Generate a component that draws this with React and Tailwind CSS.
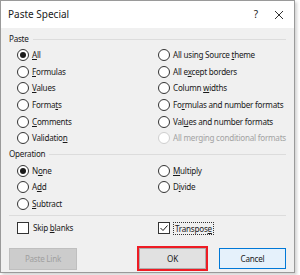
import React from 'react';

const font = { fontFamily: '"Noto Sans", "Open Sans", sans-serif' };

// label with one underlined access key (u < 0 means none)
function Label({ text, u, disabled }) {
  const color = disabled ? 'text-[#a3a3a3]' : 'text-[#1a1a1a]';
  if (u < 0) return <span className={`whitespace-nowrap ${color}`}>{text}</span>;
  return (
    <span className={`whitespace-nowrap ${color}`}>
      {text.slice(0, u)}
      <span className="underline underline-offset-[1px]">{text[u]}</span>
      {text.slice(u + 1)}
    </span>
  );
}

function Radio({ text, u, checked, disabled }) {
  return (
    <div className="h-[16.6px] flex items-center gap-[3px]">
      <div
        className={`w-[12px] h-[12px] rounded-full border bg-white flex items-center justify-center flex-shrink-0 ${
          disabled ? 'border-[#cfcfcf]' : 'border-[#333333]'
        }`}
      >
        {checked && <div className="w-[6px] h-[6px] rounded-full bg-[#1a1a1a]" />}
      </div>
      <Label text={text} u={u} disabled={disabled} />
    </div>
  );
}

function Heading({ children }) {
  return (
    <div className="h-[12px] flex items-center gap-[4px] text-[#1a1a1a]">
      <span>{children}</span>
      <div className="flex-1 h-px bg-[#dcdcdc]" />
    </div>
  );
}

const pasteLeft = [
  { text: 'All', u: 0, checked: true },
  { text: 'Formulas', u: 0 },
  { text: 'Values', u: 0 },
  { text: 'Formats', u: 5 },
  { text: 'Comments', u: 0 },
  { text: 'Validation', u: 9 },
];

const pasteRight = [
  { text: 'All using Source theme', u: 17 },
  { text: 'All except borders', u: 5 },
  { text: 'Column widths', u: 7 },
  { text: 'Formulas and number formats', u: 2 },
  { text: 'Values and number formats', u: 3 },
  { text: 'All merging conditional formats', u: -1, disabled: true },
];

const opLeft = [
  { text: 'None', u: 1, checked: true },
  { text: 'Add', u: 1 },
  { text: 'Subtract', u: 0 },
];

const opRight = [
  { text: 'Multiply', u: 0 },
  { text: 'Divide', u: 1 },
];

export default function App() {
  return (
    <div className="w-[300px] h-[275px] bg-white" style={font}>
      <div className="w-[295px] h-[273px] border border-[#9a9a9a] flex flex-col shadow-[2px_2px_3px_rgba(0,0,0,0.18)]">
        <div className="h-[27px] bg-white flex items-center pl-[7px] pr-[8px] text-[10px] text-[#1a1a1a]">
          <span className="flex-1">Paste Special</span>
          <span className="w-[20px] text-center text-[10px]">?</span>
          <svg width="10" height="10" viewBox="0 0 10 10" className="ml-[8px] mr-[2px]">
            <path d="M1 1 L9 9 M9 1 L1 9" stroke="#1a1a1a" strokeWidth="0.9" />
          </svg>
        </div>
        <div className="flex-1 bg-[#f0f0f0] pt-[5px] px-[8px] text-[8.1px] tracking-[-0.24px] leading-[12px]">
          <Heading>Paste</Heading>
          <div className="mt-[2px] pl-[8px] grid grid-cols-[141px_1fr]">
            <div className="flex flex-col">
              {pasteLeft.map((r) => (
                <Radio key={r.text} {...r} />
              ))}
            </div>
            <div className="flex flex-col">
              {pasteRight.map((r) => (
                <Radio key={r.text} {...r} />
              ))}
            </div>
          </div>
          <div className="mt-[1.5px]">
            <Heading>Operation</Heading>
          </div>
          <div className="mt-[2.5px] pl-[8px] grid grid-cols-[141px_1fr]">
            <div className="flex flex-col">
              {opLeft.map((r) => (
                <Radio key={r.text} {...r} />
              ))}
            </div>
            <div className="flex flex-col">
              {opRight.map((r) => (
                <Radio key={r.text} {...r} />
              ))}
            </div>
          </div>
          <div className="mt-[2.7px] h-px bg-[#dcdcdc]" />
          <div className="mt-[4px] pl-[8px] h-[16px] grid grid-cols-[141px_1fr] items-center">
            <div className="flex items-center gap-[4px]">
              <div className="w-[12px] h-[12px] border border-[#333333] bg-white" />
              <Label text="Skip blanks" u={5} />
            </div>
            <div className="flex items-center gap-[3px]">
              <div className="w-[12px] h-[12px] border border-[#333333] bg-white flex items-center justify-center">
                <svg width="10" height="10" viewBox="0 0 10 10">
                  <path d="M1.5 5 L4 7.5 L8.5 2.5" fill="none" stroke="#1a1a1a" strokeWidth="1" />
                </svg>
              </div>
              <span className="border border-dotted border-[#333333] px-px leading-[11px]">
                <Label text="Transpose" u={8} />
              </span>
            </div>
          </div>
          <div className="mt-[10px] flex items-center">
            <div className="w-[70px] h-[22px] border border-[#bfbfbf] bg-[#cccccc] text-[#a0a0a0] flex items-center justify-center">
              Paste Link
            </div>
            <div className="ml-[60px] w-[71px] h-[25px] border-2 border-[#ee1c24] flex items-center justify-center">
              <div className="w-[67px] h-[21px] bg-[#e1e1e1] border border-[#adadad] flex items-center justify-center text-[#1a1a1a]">
                OK
              </div>
            </div>
            <div className="ml-[11px] w-[69px] h-[21px] border border-[#0078d7] bg-[#e5f1fb] flex items-center justify-center text-[#1a1a1a]">
              Cancel
            </div>
          </div>
        </div>
      </div>
    </div>
  );
}
